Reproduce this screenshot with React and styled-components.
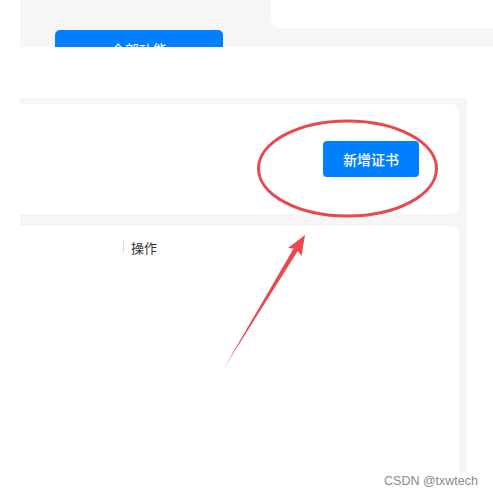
import styled, { createGlobalStyle } from "styled-components";

const GlobalStyle = createGlobalStyle`
  html, body {
    margin: 0;
    padding: 0;
    background: #ffffff;
    font-family: "Noto Sans CJK SC", "Noto Sans", sans-serif;
  }
`;

const Page = styled.div`
  position: relative;
  width: 493px;
  height: 495px;
  overflow: hidden;
  background: #ffffff;
`;

const TopStrip = styled.div`
  margin-left: 20px;
  height: 47px;
  background: #f6f6f6;
  display: flex;
  align-items: flex-start;
  overflow: hidden;
`;

const MenuButton = styled.div`
  margin: 30px 0 0 35px;
  width: 168px;
  height: 36px;
  flex-shrink: 0;
  background: #0080ff;
  border-radius: 5px;
  color: #ffffff;
  font-size: 14px;
  display: flex;
  justify-content: center;
  padding-top: 9px;
  box-sizing: border-box;
`;

const TopCard = styled.div`
  margin-left: 48px;
  flex: 1;
  height: 28px;
  background: #ffffff;
  border-bottom-left-radius: 8px;
`;

const Section = styled.div`
  margin: 51px 0 0 20px;
  width: 447px;
  height: 375px;
  background: #f6f6f6;
  padding: 6px 8px 0 0;
  box-sizing: border-box;
  display: flex;
  flex-direction: column;
  gap: 12px;
`;

const Card = styled.div`
  background: #ffffff;
  border-top-right-radius: 8px;
  border-bottom-right-radius: ${(p) => (p.$open ? "0" : "8px")};
  height: ${(p) => (p.$open ? "auto" : "110px")};
  flex: ${(p) => (p.$open ? "1" : "none")};
`;

const Toolbar = styled.div`
  display: flex;
  justify-content: flex-end;
  padding: 37px 40px 0 0;
`;

const PrimaryButton = styled.button`
  width: 96px;
  height: 36px;
  border: none;
  border-radius: 4px;
  background: #0080ff;
  color: #ffffff;
  font-family: "Noto Sans CJK SC", sans-serif;
  font-size: 14px;
  font-weight: 500;
  cursor: pointer;
`;

const HeaderRow = styled.div`
  display: flex;
  align-items: center;
  height: 42px;
  padding-left: 103px;
`;

const Divider = styled.span`
  width: 1px;
  height: 12px;
  background: #dcdcdc;
`;

const HeaderCell = styled.span`
  margin-left: 7px;
  font-size: 13px;
  color: #333333;
`;

const Annotation = styled.svg`
  position: absolute;
  left: 0;
  top: 0;
  pointer-events: none;
`;

const Watermark = styled.div`
  position: absolute;
  right: 15px;
  bottom: 7px;
  font-family: "Liberation Sans", Arial, sans-serif;
  font-size: 12.5px;
  color: #8a8a8a;
`;

export default function App() {
  return (
    <Page>
      <GlobalStyle />
      <TopStrip>
        <MenuButton>全部功能</MenuButton>
        <TopCard />
      </TopStrip>
      <Section>
        <Card>
          <Toolbar>
            <PrimaryButton>新增证书</PrimaryButton>
          </Toolbar>
        </Card>
        <Card $open>
          <HeaderRow>
            <Divider />
            <HeaderCell>操作</HeaderCell>
          </HeaderRow>
        </Card>
      </Section>
      <Annotation width="493" height="495" viewBox="0 0 493 495">
        <ellipse cx="347.5" cy="168.5" rx="89" ry="47.5" fill="none" stroke="#e8494b" strokeWidth="3" />
        <polygon
          points="305,235 301.5,256 297.8,251 224,368 293.6,248.5 288,248"
          fill="#e8494b"
        />
      </Annotation>
      <Watermark>CSDN @txwtech</Watermark>
    </Page>
  );
}
